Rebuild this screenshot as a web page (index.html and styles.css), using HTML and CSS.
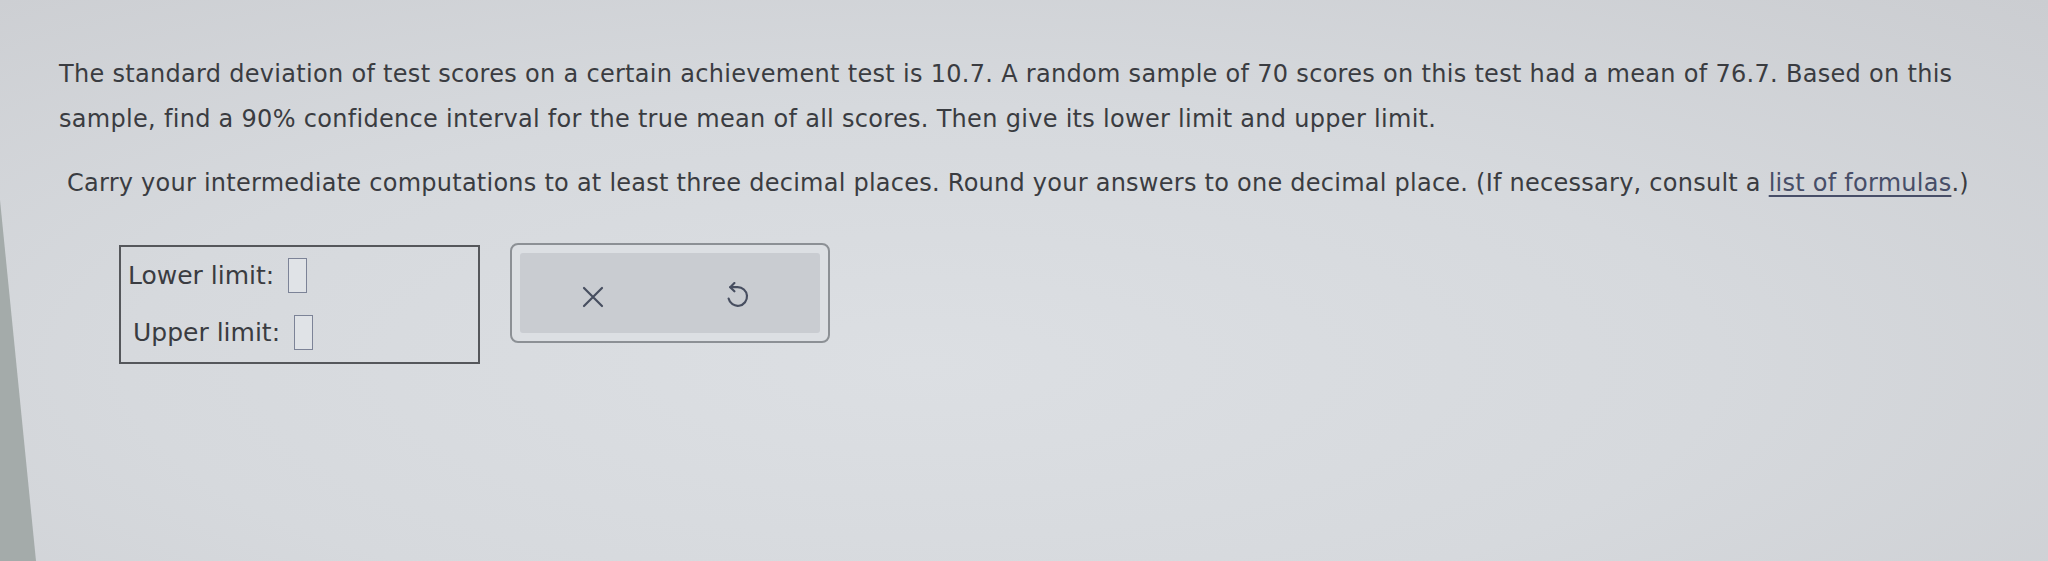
FILE: index.html
```html
<!DOCTYPE html>
<html lang="en">
<head>
    <meta charset="UTF-8">
    <meta name="viewport" content="width=device-width, initial-scale=1.0">
    <title>Confidence Interval Question</title>
    <link rel="stylesheet" href="styles.css">
</head>
<body>
    <div class="bezel"></div>

    <main class="screen">
        <p class="question">
            The standard deviation of test scores on a certain achievement test is 10.7. A random sample of 70 scores on this test had a mean of 76.7. Based on this sample, find a 90% confidence interval for the true mean of all scores. Then give its lower limit and upper limit.
        </p>
        <p class="instructions">
            Carry your intermediate computations to at least three decimal places. Round your answers to one decimal place. (If necessary, consult a <a href="#">list of formulas</a>.)
        </p>

        <div class="answer-area">
            <div class="answer-box">
                <div class="answer-row">
                    <label for="lower">Lower limit:</label>
                    <input type="text" id="lower" class="answer-input">
                </div>
                <div class="answer-row upper">
                    <label for="upper">Upper limit:</label>
                    <input type="text" id="upper" class="answer-input">
                </div>
            </div>

            <div class="tools">
                <div class="tools-inner">
                    <button class="tool-btn" title="Clear">
                        <svg width="22" height="22" viewBox="0 0 22 22">
                            <path d="M2 2 L20 20 M20 2 L2 20" fill="none" stroke="#474e60" stroke-width="2.2" stroke-linecap="round"/>
                        </svg>
                    </button>
                    <button class="tool-btn" title="Undo">
                        <svg width="25" height="29" viewBox="0 0 24 28">
                            <path d="M5 5 H12 A9 9 0 1 1 3.4 16" fill="none" stroke="#474e60" stroke-width="2.1" stroke-linecap="round"/>
                            <path d="M9 1 L5 5 L9 9" fill="none" stroke="#474e60" stroke-width="2.1" stroke-linecap="round" stroke-linejoin="round"/>
                        </svg>
                    </button>
                </div>
            </div>
        </div>
    </main>
</body>
</html>
```

FILE: styles.css
```css
html, body {
    height: 100%;
}
body {
    margin: 0;
    display: flex;
    font-family: "DejaVu Sans", Verdana, sans-serif;
    color: #3a3c41;
    background: radial-gradient(ellipse at 45% 65%, #dcdfe3 0%, #d6d9dd 50%, #cbcdd1 100%);
    overflow: hidden;
}

/* edge of the monitor bezel on the left */
.bezel {
    flex: 0 0 36px;
    background-color: #a4abaa;
    clip-path: polygon(0 200px, 100% 100%, 0 100%);
}

.screen {
    flex-grow: 1;
    padding: 52px 0 0 23px;
}

.question, .instructions {
    margin: 0;
    font-size: 24px;
    line-height: 45px;
    letter-spacing: 0.3px;
}
.question {
    max-width: 1910px;
}
.instructions {
    margin-top: 19px;
    padding-left: 8px;
    white-space: nowrap;
    letter-spacing: 0.25px;
}
.instructions a {
    color: #474e68;
    text-decoration: underline;
    text-underline-offset: 4px;
}

.answer-area {
    display: flex;
    align-items: flex-start;
    gap: 30px;
    margin-top: 37px;
    padding-left: 60px;
}

.answer-box {
    width: 350px;
    height: 115px;
    margin-top: 2px;
    border: 2px solid #55575b;
    padding: 0 0 0 7px;
}
.answer-row {
    display: flex;
    align-items: center;
    height: 57px;
    font-size: 25px;
}
.answer-row.upper {
    padding-left: 5px;
}
.answer-row label {
    margin-right: 14px;
}
.answer-input {
    width: 17px;
    height: 33px;
    padding: 0;
    border: 1.5px solid #7c8397;
    background-color: #e0e3e7;
}

.tools {
    width: 300px;
    height: 80px;
    padding: 8px;
    border: 2px solid #8c9095;
    border-radius: 8px;
    background-color: #dcdfe3;
}
.tools-inner {
    display: flex;
    height: 100%;
    padding-right: 10px;
    box-sizing: border-box;
    border-radius: 3px;
    background-color: #c9ccd1;
}
.tool-btn {
    flex: 1;
    display: flex;
    align-items: center;
    justify-content: center;
    padding: 7px 0 0;
    border: none;
    background: none;
    cursor: pointer;
}
```
